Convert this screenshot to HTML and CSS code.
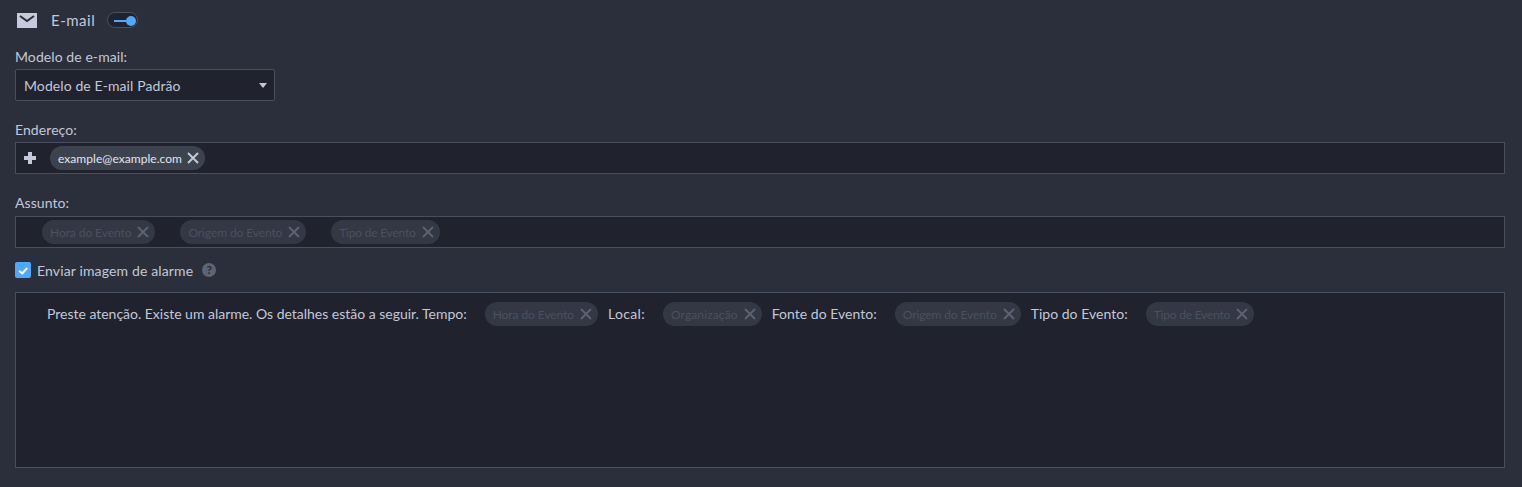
FILE: index.html
```html
<!DOCTYPE html>
<html lang="pt">
<head>
<meta charset="utf-8">
<title>E-mail</title>
<link rel="stylesheet" href="styles.css">
</head>
<body>
<div class="page">
  <div class="header">
    <svg class="mail-icon" width="20" height="15" viewBox="0 0 20 15"><path d="M0 0H20V15H0Z" fill="#c5cadc"/><path d="M3 3L10 8L17 3" fill="none" stroke="#2b2f3b" stroke-width="2"/></svg>
    <span class="header-title">E-mail</span>
    <span class="switch"><span class="switch-line"></span><span class="switch-knob"></span></span>
  </div>
  <div class="label first-label">Modelo de e-mail:</div>
  <div class="select"><span class="select-text">Modelo de E-mail Padrão</span><span class="caret"></span></div>
  <div class="label addr-label">Endereço:</div>
  <div class="box addr-box">
    <svg class="plus" width="12" height="12" viewBox="0 0 12 12"><path d="M4 0H8V4H12V8H8V12H4V8H0V4H4Z" fill="#c3c8d8"/></svg>
    <span class="tag tag-on">example@example.com<svg class="x" width="12" height="12" viewBox="0 0 12 12"><path d="M1 1L11 11M11 1L1 11" stroke="currentColor" stroke-width="2"/></svg></span>
  </div>
  <div class="label subj-label">Assunto:</div>
  <div class="box subj-box">
    <span class="tag tag-hora">Hora do Evento<svg class="x" width="12" height="12" viewBox="0 0 12 12"><path d="M1 1L11 11M11 1L1 11" stroke="currentColor" stroke-width="2"/></svg></span>
    <span class="tag tag-origem">Origem do Evento<svg class="x" width="12" height="12" viewBox="0 0 12 12"><path d="M1 1L11 11M11 1L1 11" stroke="currentColor" stroke-width="2"/></svg></span>
    <span class="tag tag-tipo">Tipo de Evento<svg class="x" width="12" height="12" viewBox="0 0 12 12"><path d="M1 1L11 11M11 1L1 11" stroke="currentColor" stroke-width="2"/></svg></span>
  </div>
  <div class="check-row">
    <span class="check"><svg width="16" height="16" viewBox="0 0 16 16"><path d="M4 8.7L7.3 11.3L12.3 6" fill="none" stroke="#fff" stroke-width="2"/></svg></span>
    <span class="check-label">Enviar imagem de alarme</span>
    <span class="help">?</span>
  </div>
  <div class="box body-box">
    <span class="body-text body-lead">Preste atenção. Existe um alarme. Os detalhes estão a seguir. Tempo:</span>
    <span class="tag tag-hora">Hora do Evento<svg class="x" width="12" height="12" viewBox="0 0 12 12"><path d="M1 1L11 11M11 1L1 11" stroke="currentColor" stroke-width="2"/></svg></span>
    <span class="body-text body-short">Local:</span>
    <span class="tag tag-org">Organização<svg class="x" width="12" height="12" viewBox="0 0 12 12"><path d="M1 1L11 11M11 1L1 11" stroke="currentColor" stroke-width="2"/></svg></span>
    <span class="body-text body-mid">Fonte do Evento:</span>
    <span class="tag tag-origem">Origem do Evento<svg class="x" width="12" height="12" viewBox="0 0 12 12"><path d="M1 1L11 11M11 1L1 11" stroke="currentColor" stroke-width="2"/></svg></span>
    <span class="body-text body-mid">Tipo do Evento:</span>
    <span class="tag tag-tipo">Tipo de Evento<svg class="x" width="12" height="12" viewBox="0 0 12 12"><path d="M1 1L11 11M11 1L1 11" stroke="currentColor" stroke-width="2"/></svg></span>
  </div>
</div>
</body>
</html>
```
FILE: styles.css
```css
html, body { margin: 0; padding: 0; }
body {
  width: 1522px;
  height: 487px;
  overflow: hidden;
  background: #2b2f3b;
  color: #c3c8d8;
  font-family: "Lato", "Noto Sans", sans-serif;
  font-size: 14px;
}
.page { padding: 0 17px 0 15px; display: flex; flex-direction: column; }
.header { display: flex; align-items: center; height: 40px; padding-left: 2px; }
.mail-icon { display: block; margin-top: 1px; }
.header-title { margin-left: 14px; font-size: 15px; letter-spacing: 0.5px; }
.switch {
  position: relative;
  margin-left: 12px;
  width: 31px;
  height: 16px;
  box-sizing: border-box;
  border: 1px solid #4a4f5f;
  border-radius: 8px;
  background: #20222e;
}
.switch-line { position: absolute; left: 6px; top: 6.5px; width: 14px; height: 2px; background: #4fa8ff; }
.switch-knob { position: absolute; left: 18px; top: 2.5px; width: 10px; height: 10px; border-radius: 50%; background: #4fa8ff; }
.label { line-height: 20px; letter-spacing: 0.08px; }
.first-label { margin-top: 7px; }
.select {
  margin-top: 2px;
  width: 260px;
  height: 32px;
  box-sizing: border-box;
  border: 1px solid #4a4f5f;
  border-radius: 2px;
  background: #20222e;
  display: flex;
  align-items: center;
  justify-content: space-between;
  padding: 0 7px 0 8px;
}
.select-text { letter-spacing: 0.09px; }
.caret { width: 0; height: 0; border: 4px solid transparent; border-top: 5px solid #c3c8d8; border-bottom: 0; }
.addr-label { margin-top: 19px; }
.box {
  box-sizing: border-box;
  border: 1px solid #4a4f5f;
  background: #20222e;
  display: flex;
  align-items: center;
  height: 32px;
}
.addr-box { margin-top: 2px; padding-left: 8px; }
.plus { display: block; margin-right: 14px; }
.subj-label { margin-top: 19px; }
.subj-box { margin-top: 3px; padding-left: 26px; gap: 25px; }
.tag {
  display: inline-flex;
  align-items: center;
  height: 24px;
  box-sizing: border-box;
  padding: 0 6px 0 8px;
  border-radius: 12px;
  background: #333844;
  color: #4a5060;
  font-size: 12px;
  white-space: nowrap;
}
.tag-on { background: #3d424f; color: #e2e5ee; letter-spacing: 0.05px; }
.tag-hora { letter-spacing: -0.07px; }
.tag-origem { letter-spacing: -0.1px; }
.tag-tipo { letter-spacing: -0.22px; }
.tag-org { letter-spacing: 0.12px; }
.x { display: block; margin-left: 6px; color: #5c6272; }
.tag-on .x { margin-left: 5px; color: #c3c8d8; }
.check-row { display: flex; align-items: center; height: 16px; margin-top: 14px; }
.check {
  width: 16px;
  height: 16px;
  border-radius: 2px;
  background: #4ca9ff;
  display: block;
}
.check svg { display: block; }
.check-label { margin-left: 6px; letter-spacing: 0.14px; }
.help {
  margin-left: 9px;
  width: 14px;
  height: 14px;
  border-radius: 50%;
  background: #5e6475;
  color: #2b2f3b;
  font-size: 12px;
  font-weight: 900;
  line-height: 14px;
  text-align: center;
}
.body-box {
  margin-top: 14px;
  height: 176px;
  align-items: flex-start;
  padding: 9px 0 0 31px;
}
.body-box .tag { margin: 0 10px 0 18px; }
.body-text { line-height: 24px; }
.body-lead { letter-spacing: -0.015px; }
.body-short { letter-spacing: 0.3px; }
.body-mid { letter-spacing: 0.03px; }
```
